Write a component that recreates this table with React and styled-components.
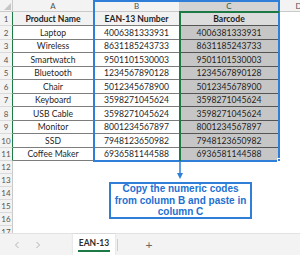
import React from 'react';
import styled, { createGlobalStyle } from 'styled-components';

const GlobalStyle = createGlobalStyle`
  html, body {
    margin: 0;
    padding: 0;
    background: #ffffff;
    overflow: hidden;
  }
  * { box-sizing: border-box; }
`;

const ROW_HEIGHTS = [12, 14, 14, 13, 14, 13, 14, 13, 14, 13, 14, 13, 13, 13, 13, 13, 13, 13];

const rows = [
  ['Laptop', '4006381333931'],
  ['Wireless', '8631185243733'],
  ['Smartwatch', '9501101530003'],
  ['Bluetooth', '1234567890128'],
  ['Chair', '5012345678900'],
  ['Keyboard', '3598271045624'],
  ['USB Cable', '3598271045624'],
  ['Monitor', '8001234567897'],
  ['SSD', '7948123650982'],
  ['Coffee Maker', '6936581144588'],
];

const Frame = styled.div`
  width: 300px;
  height: 255px;
  display: flex;
  flex-direction: column;
  overflow: hidden;
  font-family: Lato, "Liberation Sans", sans-serif;
  color: #1f1f1f;
`;

const SheetArea = styled.div`
  position: relative;
  flex: 1;
  overflow: hidden;
`;

const Grid = styled.div`
  display: grid;
  grid-template-columns: 13px 81px 86px 99px 40px;
  grid-template-rows: ${ROW_HEIGHTS.map((h) => h + 'px').join(' ')};
`;

const Corner = styled.div`
  position: relative;
  background: #f3f3f3;
  border-right: 1px solid #c9c9c9;
  border-bottom: 1px solid #c9c9c9;
  &::after {
    content: '';
    position: absolute;
    right: 1px;
    bottom: 1px;
    border-style: solid;
    border-width: 0 0 7px 7px;
    border-color: transparent transparent #c6c6c6 transparent;
  }
`;

const ColHead = styled.div`
  display: flex;
  align-items: center;
  justify-content: center;
  font-size: 8px;
  color: ${(p) => (p.$selected ? '#1e5c3a' : '#505050')};
  background: ${(p) => (p.$selected ? '#d3d3d3' : '#f3f3f3')};
  border-right: 1px solid #d0d0d0;
  border-bottom: 1px solid #c9c9c9;
`;

const RowHead = styled.div`
  display: flex;
  align-items: center;
  justify-content: center;
  font-size: 8px;
  color: #555555;
  background: #f3f3f3;
  border-bottom: 1px solid #dadada;
  border-right: 1px solid ${(p) => (p.$selected ? '#1e7a45' : '#c9c9c9')};
`;

const cellBg = {
  head: '#f2f2f2',
  data: '#ffffff',
  selHead: '#dcdcdc',
  sel: '#c6c6c6',
  empty: '#ffffff',
};

const Cell = styled.div`
  display: flex;
  align-items: center;
  justify-content: center;
  white-space: nowrap;
  overflow: hidden;
  font-size: 8.6px;
  font-weight: ${(p) => (p.$bold ? 700 : 400)};
  background: ${(p) => cellBg[p.$variant]};
  border-right: 1px solid ${(p) => (p.$variant === 'empty' ? 'transparent' : p.$variant === 'sel' || p.$variant === 'selHead' ? '#555555' : '#7d7d7d')};
  border-bottom: 1px solid ${(p) => (p.$variant === 'empty' ? 'transparent' : p.$variant === 'sel' || p.$variant === 'selHead' ? '#555555' : '#7d7d7d')};
`;

const AnnotationBox = styled.div`
  position: absolute;
  left: 93px;
  top: 0;
  width: 187px;
  height: 162px;
  border: 2px solid #2f7ed8;
  pointer-events: none;
`;

const Selection = styled.div`
  position: absolute;
  left: 179px;
  top: 11px;
  width: 100px;
  height: 150px;
  border: 2px solid #1e7a45;
  border-right: none;
  border-bottom: none;
  pointer-events: none;
`;

const FillHandle = styled.div`
  position: absolute;
  left: 277px;
  top: 158px;
  width: 4px;
  height: 4px;
  background: #2f7ed8;
  border: 1px solid #ffffff;
`;

const Pointer = styled.svg`
  position: absolute;
  left: 176px;
  top: 162px;
`;

const Callout = styled.div`
  position: absolute;
  left: 109px;
  top: 182px;
  width: 143px;
  height: 37px;
  display: flex;
  align-items: center;
  justify-content: center;
  text-align: center;
  background: #ffffff;
  border: 2px solid #2f7ed8;
  color: #2370d2;
  font-family: "Liberation Sans", Arial, sans-serif;
  font-weight: 700;
  font-size: 10px;
  line-height: 11.5px;
`;

const TabBar = styled.div`
  height: 22px;
  display: flex;
  align-items: stretch;
  background: #f3f3f3;
  border-top: 1px solid #e2e2e2;
`;

const NavArrow = styled.div`
  width: ${(p) => p.$w}px;
  display: flex;
  align-items: center;
  justify-content: center;
`;

const Tab = styled.div`
  width: 42px;
  margin-left: ${(p) => p.$offset}px;
  background: #ffffff;
  display: flex;
  flex-direction: column;
  align-items: center;
  justify-content: center;
  box-shadow: 0 0 2px rgba(0, 0, 0, 0.12);
`;

const TabLabel = styled.span`
  font-size: 8.5px;
  font-weight: 700;
  color: #2b2b2b;
  padding: 1px 1px 2px;
  border-bottom: 2px solid #1e7a45;
`;

const Divider = styled.div`
  width: 1px;
  margin: 5px 0 4px 2px;
  background: #cfcfcf;
`;

const AddButton = styled.div`
  width: 62px;
  display: flex;
  align-items: center;
  justify-content: center;
  font-size: 12px;
  color: #666666;
`;

const Chevron = ({ dir }) => (
  <svg width="6" height="8" viewBox="0 0 6 8">
    <polyline
      points={dir === 'left' ? '4.5,1 1.5,4 4.5,7' : '1.5,1 4.5,4 1.5,7'}
      fill="none"
      stroke="#b3b3b3"
      strokeWidth="1"
    />
  </svg>
);

export default function App() {
  const body = [];
  for (let r = 1; r <= 17; r++) {
    const inTable = r <= 11;
    body.push(
      <RowHead key={'rh' + r} $selected={inTable}>
        {r}
      </RowHead>
    );
    if (r === 1) {
      body.push(
        <Cell key="a1" $variant="head" $bold>Product Name</Cell>,
        <Cell key="b1" $variant="head" $bold>EAN-13 Number</Cell>,
        <Cell key="c1" $variant="selHead" $bold>Barcode</Cell>,
        <Cell key="d1" $variant="empty" />
      );
    } else if (inTable) {
      const [name, code] = rows[r - 2];
      body.push(
        <Cell key={'a' + r} $variant="data">{name}</Cell>,
        <Cell key={'b' + r} $variant="data">{code}</Cell>,
        <Cell key={'c' + r} $variant="sel">{code}</Cell>,
        <Cell key={'d' + r} $variant="empty" />
      );
    } else {
      ['a', 'b', 'c', 'd'].forEach((c) =>
        body.push(<Cell key={c + r} $variant="empty" />)
      );
    }
  }

  return (
    <>
      <GlobalStyle />
      <Frame>
        <SheetArea>
          <Grid>
            <Corner />
            <ColHead>A</ColHead>
            <ColHead>B</ColHead>
            <ColHead $selected>C</ColHead>
            <ColHead>D</ColHead>
            {body}
          </Grid>
          <AnnotationBox />
          <Selection />
          <FillHandle />
          <Pointer width="8" height="18" viewBox="0 0 8 18">
            <line x1="4" y1="0" x2="4" y2="12" stroke="#2f7ed8" strokeWidth="1.5" />
            <polygon points="1,11 7,11 4,17" fill="#2f7ed8" />
          </Pointer>
          <Callout>
            Copy the numeric codes
            <br />
            from column B and paste in
            <br />
            column C
          </Callout>
        </SheetArea>
        <TabBar>
          <NavArrow $w={34}><Chevron dir="left" /></NavArrow>
          <NavArrow $w={8}><Chevron dir="right" /></NavArrow>
          <Tab $offset={31}>
            <TabLabel>EAN-13</TabLabel>
          </Tab>
          <Divider />
          <AddButton>+</AddButton>
        </TabBar>
      </Frame>
    </>
  );
}
